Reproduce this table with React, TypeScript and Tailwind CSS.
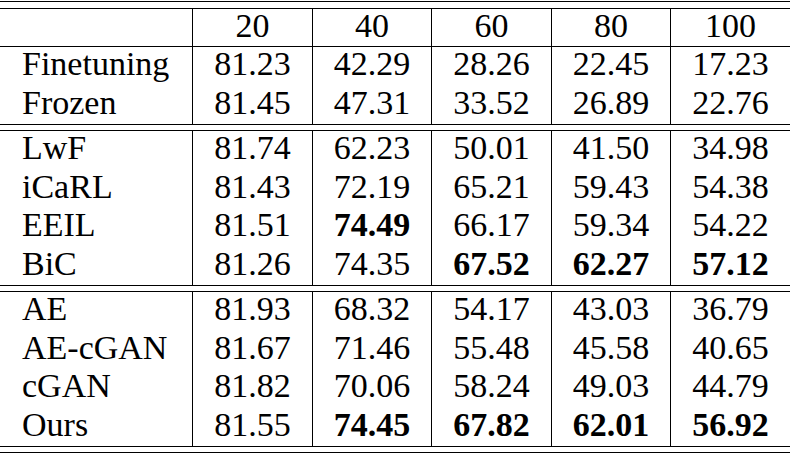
const groups: { name: string; vals: string[]; bold?: number[] }[][] = [
  [
    { name: "Finetuning", vals: ["81.23", "42.29", "28.26", "22.45", "17.23"] },
    { name: "Frozen", vals: ["81.45", "47.31", "33.52", "26.89", "22.76"] },
  ],
  [
    { name: "LwF", vals: ["81.74", "62.23", "50.01", "41.50", "34.98"] },
    { name: "iCaRL", vals: ["81.43", "72.19", "65.21", "59.43", "54.38"] },
    { name: "EEIL", vals: ["81.51", "74.49", "66.17", "59.34", "54.22"], bold: [1] },
    { name: "BiC", vals: ["81.26", "74.35", "67.52", "62.27", "57.12"], bold: [2, 3, 4] },
  ],
  [
    { name: "AE", vals: ["81.93", "68.32", "54.17", "43.03", "36.79"] },
    { name: "AE-cGAN", vals: ["81.67", "71.46", "55.48", "45.58", "40.65"] },
    { name: "cGAN", vals: ["81.82", "70.06", "58.24", "49.03", "44.79"] },
    { name: "Ours", vals: ["81.55", "74.45", "67.82", "62.01", "56.92"], bold: [1, 2, 3, 4] },
  ],
];

const cols = "grid grid-cols-[192px_120px_119px_120px_119px_120px]";

function Row({ name, vals, bold = [] }: { name: string; vals: string[]; bold?: number[] }) {
  return (
    <div className={`${cols} h-[38.5px]`}>
      <div className="flex items-center pb-[4px] pl-[22px]">{name}</div>
      {vals.map((v, i) => (
        <div
          key={i}
          className={`flex items-center justify-center border-l border-black pb-[4px] ${
            bold.includes(i) ? "font-bold" : ""
          }`}
        >
          {v}
        </div>
      ))}
    </div>
  );
}

export default function App() {
  return (
    <div
      className="w-[794px] h-[457px] bg-white pt-[1px] text-[34px] leading-none text-black"
      style={{ fontFamily: '"Liberation Serif", "Times New Roman", serif' }}
    >
      <div className="w-[790px]">
        <div className="h-px bg-black mb-[6px]" />
        <div className="border-y border-black">
          <div className={`${cols} h-[38px] border-b border-black`}>
            <div />
            {["20", "40", "60", "80", "100"].map((h) => (
              <div key={h} className="flex items-center justify-center border-l border-black pb-[5px]">
                {h}
              </div>
            ))}
          </div>
          {groups[0].map((r) => (
            <Row key={r.name} {...r} />
          ))}
        </div>
        {groups.slice(1).map((g, gi) => (
          <div key={gi} className="mt-[5px] border-y border-black">
            {g.map((r) => (
              <Row key={r.name} {...r} />
            ))}
          </div>
        ))}
        <div className="h-px bg-black mt-[5px]" />
      </div>
    </div>
  );
}
